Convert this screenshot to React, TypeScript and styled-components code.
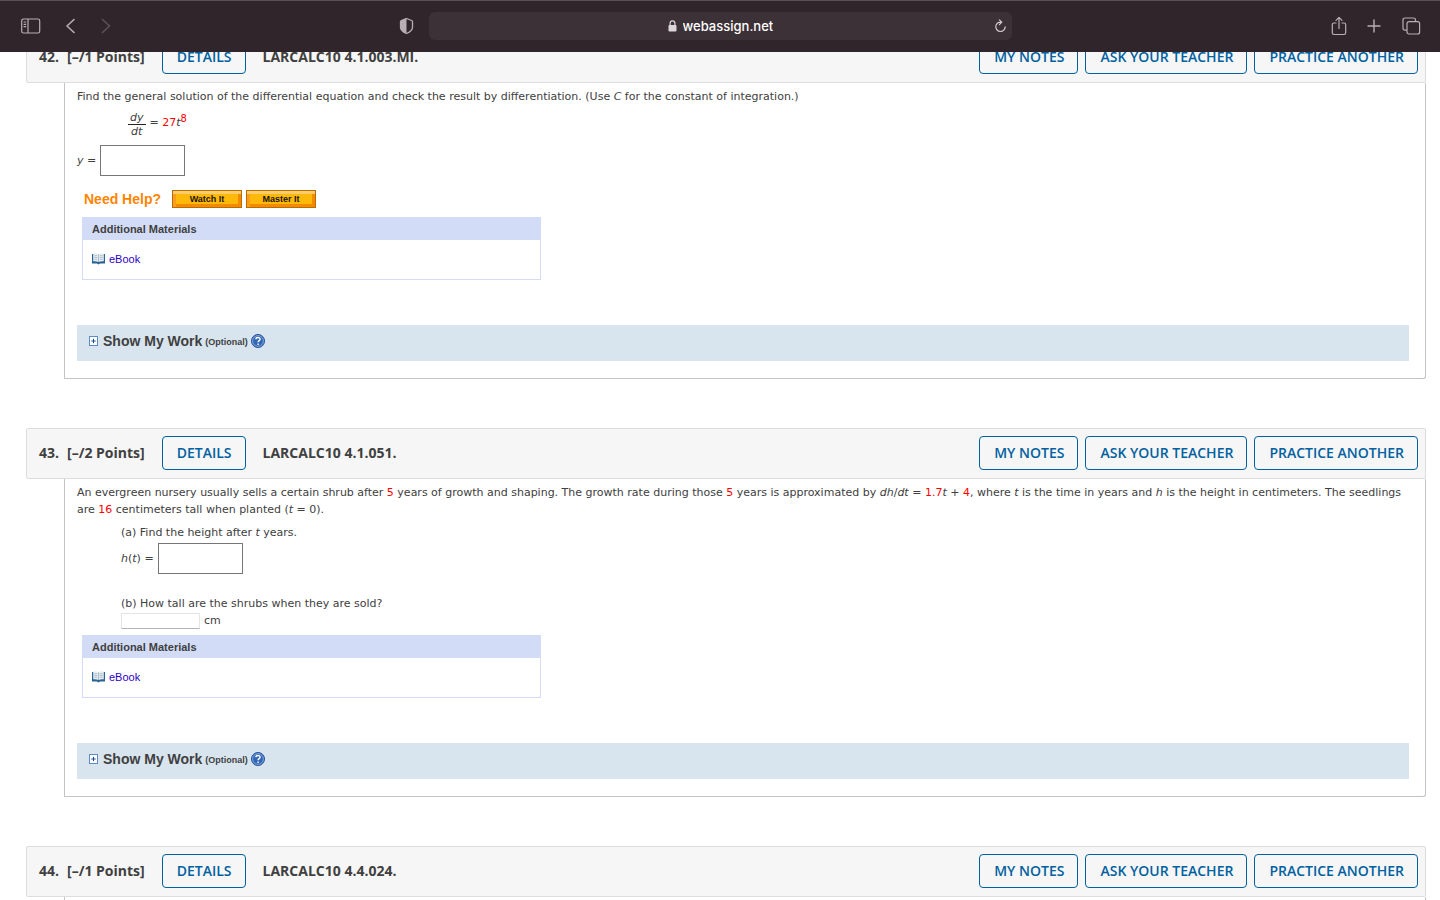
import React from "react";
import styled, { createGlobalStyle } from "styled-components";

const GlobalStyle = createGlobalStyle`
  *, *::before, *::after { box-sizing: border-box; }
  body {
    margin: 0;
    background: #fff;
    color: #404040;
    font-family: "DejaVu Sans", Verdana, sans-serif;
    font-size: 11px;
    line-height: 17px;
  }
`;

const arial = `"Liberation Sans", Arial, sans-serif`;
const openSans = `"Open Sans", sans-serif`;

const Window = styled.div`
  height: 100vh;
  overflow: hidden;
`;

/* ---------- browser toolbar ---------- */

const Toolbar = styled.header`
  position: relative;
  z-index: 1;
  display: grid;
  grid-template-columns: 1fr minmax(200px, 583px) 1fr;
  align-items: center;
  height: 52px;
  padding-bottom: 2px;
  background: #2f252a;
  border-top: 1px solid #5a5055;
`;

const ToolGroup = styled.div<{ $end?: boolean }>`
  display: flex;
  align-items: center;
  gap: ${(p) => (p.$end ? 17 : 16)}px;
  justify-content: ${(p) => (p.$end ? "flex-end" : "flex-start")};
  padding: ${(p) => (p.$end ? "0 19px 0 0" : "0 15px 0 21px")};
`;

const ToolButton = styled.button<{ $dim?: boolean; $last?: boolean }>`
  display: flex;
  padding: 0;
  border: 0;
  background: none;
  color: ${(p) => (p.$dim ? "#5c5257" : "#b9aeb4")};
  margin-left: ${(p) => (p.$last ? "auto" : "0")};
`;

const AddressBar = styled.div`
  display: grid;
  grid-template-columns: 1fr auto 1fr;
  align-items: center;
  height: 28px;
  padding: 0 5px;
  border-radius: 6px;
  background: #3c3136;
  color: #dcd6d9;
`;

const Address = styled.label`
  grid-column: 2;
  display: flex;
  align-items: center;
  gap: 6px;
`;

const AddressInput = styled.input`
  width: 90px;
  padding: 0;
  border: 0;
  outline: 0;
  background: none;
  color: #fff;
  font: 500 13px/18px Inter, sans-serif;
`;

const ReloadButton = styled(ToolButton)`
  justify-self: end;
  color: #d2cbce;
`;

/* ---------- question cards ---------- */

const Page = styled.main`
  display: flex;
  flex-direction: column;
  gap: 49px;
  margin-top: -20px;
  padding: 0 14px 0 26px;
`;

const QuestionBar = styled.div`
  display: flex;
  align-items: center;
  padding: 7px 7px 8px 12px;
  border: 1px solid #ddd;
  border-radius: 2px;
  background: #f6f6f6;
`;

const QuestionTitle = styled.h2`
  display: flex;
  align-items: center;
  margin: 0;
  font: 700 14px/20px ${openSans};
  white-space: nowrap;
`;

const QuestionNumber = styled.span`
  width: 28px;
`;

const OutlineButton = styled.button`
  height: 34px;
  padding: 0 13px 0 14px;
  border: 1px solid #0061a0;
  border-radius: 4px;
  background: transparent;
  color: #0061a0;
  font: 600 14px/20px ${openSans};
  white-space: nowrap;
`;

const DetailsButton = styled(OutlineButton)`
  margin: 0 17px;
`;

const Actions = styled.div`
  display: flex;
  gap: 7px;
  margin-left: auto;
`;

const QuestionBody = styled.div`
  margin-left: 38px;
  padding: 5px 12px 17px;
  border: 1px solid #c4c4c4;
  border-top: 0;
  border-radius: 0 0 3px 0;
`;

const Paragraph = styled.p`
  margin: 0;
`;

const Value = styled.span`
  color: #f00;
`;

const Equation = styled.div`
  display: flex;
  align-items: center;
  gap: 4px;
  margin: 6px 0 7px 51px;
`;

const Fraction = styled.span`
  display: flex;
  flex-direction: column;
  align-items: center;
  line-height: 13px;
`;

const Numerator = styled.i`
  padding: 0 2px;
  border-bottom: 1px solid #222;
`;

const EquationSide = styled.span`
  padding-bottom: 5px;
`;

const Exponent = styled.sup`
  color: #f00;
  font-size: 10px;
  line-height: 0;
  vertical-align: 4px;
`;

const Answer = styled.label`
  display: flex;
  align-items: center;
  gap: 4px;
`;

const MathInput = styled.input`
  width: 85px;
  height: 31px;
  border: 1px solid #767676;
  background: #fff;
`;

const NumberInput = styled.input`
  width: 79px;
  height: 16px;
  border: 1px solid #e4e4e4;
  border-bottom-color: #b4b4b4;
  background: #fff;
`;

const Part = styled.div<{ $before: number; $gap?: number }>`
  display: flex;
  flex-direction: column;
  gap: ${(p) => p.$gap ?? 0}px;
  margin: ${(p) => p.$before}px 0 0 44px;
`;

const HelpRow = styled.div`
  display: flex;
  align-items: center;
  gap: 4px;
  margin: 14px 0 9px 7px;
`;

const HelpLabel = styled.span`
  width: 84px;
  color: #ff8400;
  font: 700 14px/16px ${arial};
`;

const HelpButton = styled.button`
  min-width: 70px;
  height: 18px;
  padding: 0 14px;
  border: 1px solid #b96c00;
  background: #fdb90a;
  box-shadow: inset 0 3px 0 #fccb6a, inset 3px 0 0 #f99d1c, inset -3px 0 0 #f48a00, inset 0 -3px 0 #f48a00;
  color: #1c1400;
  font: 700 9px/16px ${arial};
`;

const Materials = styled.section<{ $gap: number }>`
  width: 459px;
  margin: ${(p) => p.$gap}px 0 0 5px;
  border: 1px solid #d3dcf7;
  font-family: ${arial};
`;

const MaterialsTitle = styled.h3`
  margin: 0;
  padding: 3px 9px 2px;
  background: #d3dcf7;
  font-size: 11px;
  line-height: 17px;
`;

const MaterialLink = styled.a`
  display: flex;
  align-items: center;
  gap: 4px;
  padding: 11px 9px;
  color: #2a00c8;
  text-decoration: none;
`;

const WorkPanel = styled.section`
  display: flex;
  align-items: center;
  height: 36px;
  margin: 45px 4px 0 0;
  padding: 0 12px 4px;
  background: #d8e5ef;
  font-family: ${arial};
`;

const WorkToggle = styled.button`
  display: flex;
  align-items: center;
  gap: 5px;
  padding: 0;
  border: 0;
  background: none;
  color: #404040;
  font: 700 14px/18px ${arial};
`;

const Optional = styled.small`
  margin: 3px 3px 0;
  font-size: 9px;
  font-weight: 700;
  line-height: 15px;
`;

const HelpIconButton = styled.button`
  display: flex;
  padding: 0;
  border: 0;
  background: none;
`;

/* ---------- icons ---------- */

const SidebarIcon = () => (
  <svg width="20" height="16" viewBox="0 0 20 16" fill="none" stroke="currentColor" strokeWidth="1.2">
    <rect x="0.7" y="1" width="18" height="14" rx="1.8" />
    <path d="M7 1v14M2.600 4h2.600M2.600 6.300h2.600M2.600 8.600h2.600" />
  </svg>
);

const BackIcon = () => (
  <svg width="18" height="16" viewBox="0 0 18 16" fill="none" stroke="currentColor" strokeWidth="1.6" strokeLinecap="round" strokeLinejoin="round">
    <path d="M17 1.500 10 8l7 6.500" />
  </svg>
);

const ForwardIcon = () => (
  <svg width="20" height="16" viewBox="0 0 20 16" fill="none" stroke="currentColor" strokeWidth="1.6" strokeLinecap="round" strokeLinejoin="round">
    <path d="M11.500 1.500 18.500 8l-7 6.500" />
  </svg>
);

const ShieldIcon = () => (
  <svg width="15" height="18" viewBox="0 0 15 18">
    <path d="M7.500 1.500 12.700 3.500q.8.300.8 1.100V10.200c0 2.700-2.600 4.800-6 6.300-3.400-1.500-6-3.600-6-6.300V4.600q0-.8.800-1.100Z" fill="none" stroke="currentColor" strokeWidth="1.300" />
    <path d="M7.500 1.500 2.300 3.500q-.8.300-.8 1.100V10.200c0 2.700 2.600 4.800 6 6.300Z" fill="currentColor" />
  </svg>
);

const LockIcon = () => (
  <svg width="9" height="12" viewBox="0 0 9 12">
    <rect x="0.500" y="5" width="8" height="6.500" rx="1" fill="currentColor" />
    <path d="M2.100 5.500V3.300a2.400 2.400 0 0 1 4.800 0v2.200" fill="none" stroke="currentColor" strokeWidth="1.200" />
  </svg>
);

const ReloadIcon = () => (
  <svg width="13" height="14" viewBox="0 0 13 14" fill="none" stroke="currentColor" strokeWidth="1.200" strokeLinecap="round" strokeLinejoin="round">
    <path d="M6.800 3.100A4.700 4.700 0 1 0 11.200 7.800M5.400.8 7.800 3.200 5.400 5.600" />
  </svg>
);

const ShareIcon = () => (
  <svg width="16" height="20" viewBox="0 0 16 20" fill="none" stroke="currentColor" strokeWidth="1.200" strokeLinecap="round" strokeLinejoin="round">
    <path d="M5 7H3Q1.300 7 1.300 8.700v8.100q0 1.700 1.700 1.700h10q1.700 0 1.700-1.700V8.700Q14.700 7 13 7h-2M8 12.500V1.500M5 4.300l3-3 3 3" />
  </svg>
);

const PlusIcon = () => (
  <svg width="20" height="20" viewBox="0 0 20 20" fill="none" stroke="currentColor" strokeWidth="1.400" strokeLinecap="round">
    <path d="M10 4v12M4 10h12" />
  </svg>
);

const TabsIcon = () => (
  <svg width="20" height="20" viewBox="0 0 20 20" fill="none" stroke="currentColor" strokeWidth="1.200">
    <rect x="6" y="5.700" width="12.600" height="12.300" rx="2" />
    <path d="M5.800 14.200H4q-2 0-2-2V4q0-2 2-2h8.500q2 0 2 2v1.500" />
  </svg>
);

const BookIcon = () => (
  <svg width="13" height="15" viewBox="0 0 13 15">
    <path d="M0 2h13v9.500H8l-1.500 1-1.500-1H0Z" fill="#2a6496" />
    <path d="M1.200 1.500q3-.6 5.300.6Q8.800.9 11.800 1.500v7.800q-3-.5-5.300.8-2.300-1.300-5.300-.8Z" fill="#e9eff3" />
    <path d="M6.500 2.300V10M2.300 3.700h3M2.300 5.500h3M2.300 7.300h3M7.700 3.700h3M7.700 5.500h3M7.700 7.300h3" stroke="#9fb4c3" strokeWidth=".8" />
  </svg>
);

const ExpandIcon = () => (
  <svg width="9" height="10" viewBox="0 0 9 10">
    <rect x="0.500" y="0.500" width="8" height="9" fill="#fff" stroke="#5b8bc6" />
    <path d="M2.300 5h4.400M4.500 2.800v4.400" stroke="#234f8c" />
  </svg>
);

const QuestionIcon = () => (
  <svg width="14" height="14" viewBox="0 0 14 14">
    <circle cx="7" cy="7" r="6.500" fill="#3366b5" stroke="#27539b" />
    <circle cx="7" cy="7" r="5.400" fill="none" stroke="#a7c2ea" strokeWidth=".7" />
    <path d="M4.900 5.300c.1-2.500 4.300-2.300 4.200 0C9 6.700 7.100 6.600 7.100 8.300M7.100 9.600v1.500" fill="none" stroke="#fff" strokeWidth="1.400" />
  </svg>
);

/* ---------- composed parts ---------- */

type BarProps = { number: number; points: number; code: string };

const QuestionHeader = ({ number, points, code }: BarProps) => (
  <QuestionBar>
    <QuestionTitle>
      <QuestionNumber>{number}.</QuestionNumber>
      <span>[–/{points} Points]</span>
    </QuestionTitle>
    <DetailsButton>DETAILS</DetailsButton>
    <QuestionTitle as="span">{code}</QuestionTitle>
    <Actions>
      <OutlineButton>MY NOTES</OutlineButton>
      <OutlineButton>ASK YOUR TEACHER</OutlineButton>
      <OutlineButton>PRACTICE ANOTHER</OutlineButton>
    </Actions>
  </QuestionBar>
);

const AdditionalMaterials = ({ gap }: { gap: number }) => (
  <Materials $gap={gap}>
    <MaterialsTitle>Additional Materials</MaterialsTitle>
    <MaterialLink href="#ebook">
      <BookIcon />
      eBook
    </MaterialLink>
  </Materials>
);

const ShowMyWork = () => (
  <WorkPanel>
    <WorkToggle aria-expanded="false">
      <ExpandIcon />
      Show My Work
    </WorkToggle>
    <Optional>(Optional)</Optional>
    <HelpIconButton aria-label="Help">
      <QuestionIcon />
    </HelpIconButton>
  </WorkPanel>
);

export default function App() {
  return (
    <Window>
      <GlobalStyle />
      <Toolbar>
        <ToolGroup>
          <ToolButton aria-label="Sidebar"><SidebarIcon /></ToolButton>
          <ToolButton aria-label="Back"><BackIcon /></ToolButton>
          <ToolButton aria-label="Forward" $dim><ForwardIcon /></ToolButton>
          <ToolButton aria-label="Privacy report" $last><ShieldIcon /></ToolButton>
        </ToolGroup>
        <AddressBar>
          <Address>
            <LockIcon />
            <AddressInput aria-label="Address" defaultValue="webassign.net" />
          </Address>
          <ReloadButton aria-label="Reload"><ReloadIcon /></ReloadButton>
        </AddressBar>
        <ToolGroup $end>
          <ToolButton aria-label="Share"><ShareIcon /></ToolButton>
          <ToolButton aria-label="New tab"><PlusIcon /></ToolButton>
          <ToolButton aria-label="Tab overview"><TabsIcon /></ToolButton>
        </ToolGroup>
      </Toolbar>

      <Page>
        <article>
          <QuestionHeader number={42} points={1} code="LARCALC10 4.1.003.MI." />
          <QuestionBody>
            <Paragraph>
              Find the general solution of the differential equation and check the result by
              differentiation. (Use <i>C</i> for the constant of integration.)
            </Paragraph>
            <Equation>
              <Fraction>
                <Numerator>dy</Numerator>
                <i>dt</i>
              </Fraction>
              <EquationSide>
                = <Value>27</Value><i>t</i><Exponent>8</Exponent>
              </EquationSide>
            </Equation>
            <Answer>
              <span><i>y</i> =</span>
              <MathInput type="text" />
            </Answer>
            <HelpRow>
              <HelpLabel>Need Help?</HelpLabel>
              <HelpButton>Watch It</HelpButton>
              <HelpButton>Master It</HelpButton>
            </HelpRow>
            <AdditionalMaterials gap={0} />
            <ShowMyWork />
          </QuestionBody>
        </article>

        <article>
          <QuestionHeader number={43} points={2} code="LARCALC10 4.1.051." />
          <QuestionBody>
            <Paragraph>
              An evergreen nursery usually sells a certain shrub after <Value>5</Value> years of
              growth and shaping. The growth rate during those <Value>5</Value> years is
              approximated by <i>dh</i>/<i>dt</i> = <Value>1.7</Value><i>t</i> + <Value>4</Value>,
              where <i>t</i> is the time in years and <i>h</i> is the height in centimeters. The
              seedlings are <Value>16</Value> centimeters tall when planted (<i>t</i> = 0).
            </Paragraph>
            <Part $before={6} $gap={2}>
              <Paragraph>(a) Find the height after <i>t</i> years.</Paragraph>
              <Answer>
                <span><i>h</i>(<i>t</i>) =</span>
                <MathInput type="text" />
              </Answer>
            </Part>
            <Part $before={21}>
              <Paragraph>(b) How tall are the shrubs when they are sold?</Paragraph>
              <Answer>
                <NumberInput type="text" aria-label="Height when sold" />
                cm
              </Answer>
            </Part>
            <AdditionalMaterials gap={6} />
            <ShowMyWork />
          </QuestionBody>
        </article>

        <article>
          <QuestionHeader number={44} points={1} code="LARCALC10 4.4.024." />
          <QuestionBody />
        </article>
      </Page>
    </Window>
  );
}
